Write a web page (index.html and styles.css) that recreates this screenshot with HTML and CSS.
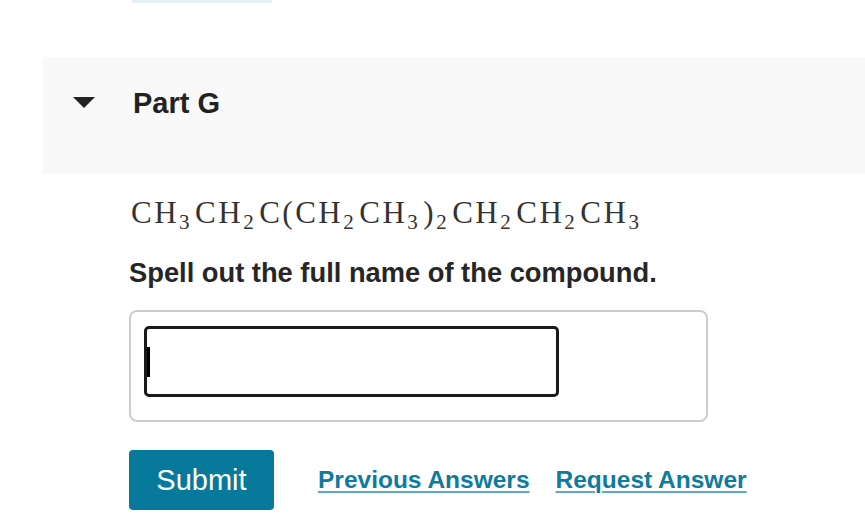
FILE: index.html
```html
<!DOCTYPE html>
<html lang="en">
<head>
<meta charset="utf-8">
<title>Part G</title>
<link rel="stylesheet" href="styles.css">
</head>
<body>
<div class="topline"></div>
<div class="part-header">
  <span class="toggle" aria-hidden="true"></span>
  <h2 class="part-title">Part G</h2>
</div>
<div class="content">
  <div class="formula">CH<span class="sub">3</span>CH<span class="sub">2</span>C(CH<span class="sub">2</span>CH<span class="sub">3</span>)<span class="sub">2</span>CH<span class="sub">2</span>CH<span class="sub">2</span>CH<span class="sub">3</span></div>
  <p class="prompt">Spell out the full name of the compound.</p>
  <div class="answer-box">
    <div class="answer-input"><span class="caret"></span></div>
  </div>
  <div class="actions">
    <button class="submit" type="button">Submit</button>
    <a class="link prev" href="#">Previous Answers</a>
    <a class="link req" href="#">Request Answer</a>
  </div>
</div>
</body>
</html>
```

FILE: styles.css
```css
html, body {
  margin: 0;
  padding: 0;
  background: #ffffff;
}

body {
  font-family: "Liberation Sans", Arial, sans-serif;
  color: #262626;
}

.topline {
  margin-left: 132px;
  width: 140px;
  height: 3px;
  background: #e3eff3;
}

.part-header {
  margin: 54px 0 0 43px;
  height: 117px;
  box-sizing: border-box;
  padding: 30px 0 0 30px;
  background: #f9f9f9;
  display: flex;
  align-items: flex-start;
}

.toggle {
  margin-top: 10px;
  width: 0;
  height: 0;
  border-left: 11px solid transparent;
  border-right: 11px solid transparent;
  border-top: 11px solid #222222;
}

.part-title {
  margin: 0 0 0 38px;
  font-size: 29px;
  line-height: 32px;
  font-weight: bold;
  color: #222222;
}

.content {
  padding-left: 129px;
}

.formula {
  margin-top: 19px;
  padding-left: 2px;
  font-family: "Liberation Serif", "Times New Roman", serif;
  font-size: 31px;
  line-height: 40px;
  letter-spacing: 2.5px;
  color: #333333;
  white-space: nowrap;
}

.sub {
  font-size: 21px;
  line-height: 0;
  vertical-align: -6px;
  margin-right: 3px;
}

.prompt {
  margin: 24px 0 0 0;
  font-size: 27.3px;
  line-height: 32px;
  font-weight: bold;
  color: #262626;
}

.answer-box {
  margin-top: 21px;
  width: 579px;
  height: 112px;
  box-sizing: border-box;
  border: 2px solid #cdcdcd;
  border-radius: 8px;
  padding: 14px 0 0 13px;
}

.answer-input {
  width: 415px;
  height: 71px;
  box-sizing: border-box;
  border: 3px solid #1a1a1a;
  border-radius: 5px;
  display: flex;
  align-items: center;
}

.caret {
  width: 3px;
  height: 30px;
  background: #000000;
}

.actions {
  margin-top: 28px;
  display: flex;
  align-items: center;
}

.submit {
  width: 145px;
  height: 60px;
  padding: 0;
  border: none;
  border-radius: 4px;
  background: #077a9c;
  color: #ffffff;
  font-family: "Liberation Sans", Arial, sans-serif;
  font-size: 29px;
  cursor: pointer;
}

.link {
  font-size: 24.5px;
  font-weight: bold;
  color: #0f7b9d;
  text-decoration: underline;
  text-decoration-color: #5ca9c2;
  text-decoration-thickness: 2px;
  text-underline-offset: 3px;
}

.prev {
  margin-left: 44px;
}

.req {
  margin-left: 26px;
}
```
